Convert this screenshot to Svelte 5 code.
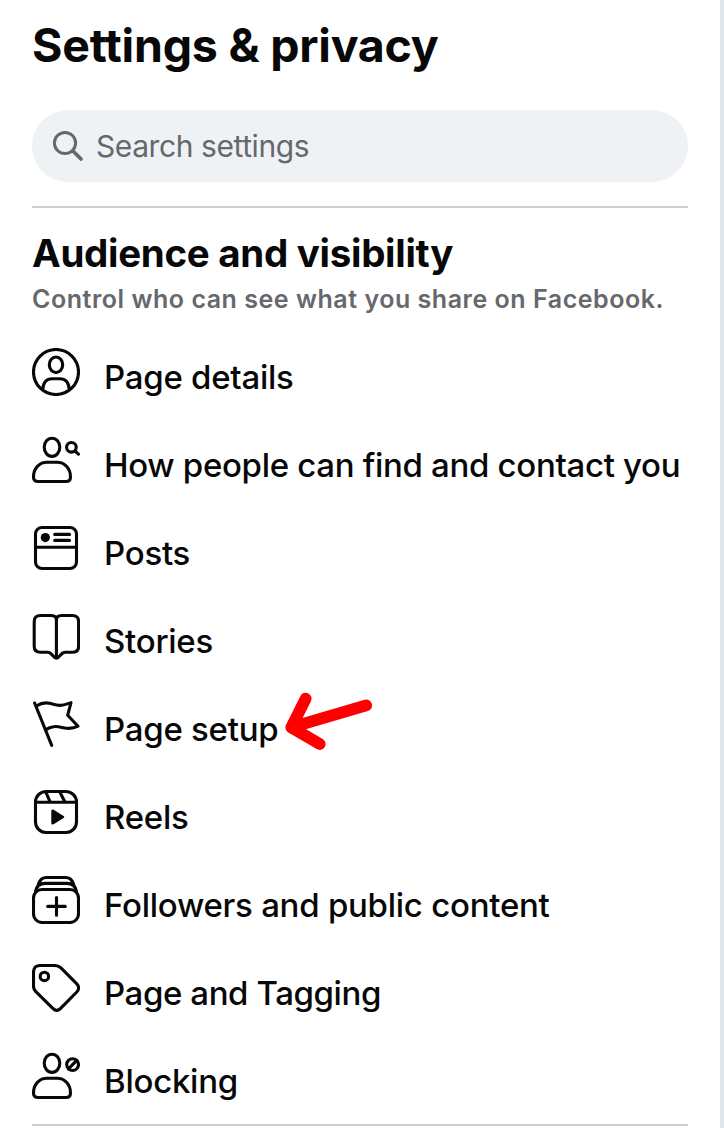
<script>
  const items = [
    { icon: 'profile', label: 'Page details' },
    { icon: 'find', label: 'How people can find and contact you' },
    { icon: 'posts', label: 'Posts' },
    { icon: 'stories', label: 'Stories' },
    { icon: 'flag', label: 'Page setup', marked: true },
    { icon: 'reels', label: 'Reels' },
    { icon: 'followers', label: 'Followers and public content' },
    { icon: 'tag', label: 'Page and Tagging' },
    { icon: 'blocking', label: 'Blocking' }
  ];
</script>

{#snippet person()}
  <ellipse cx="20" cy="11.3" rx="7.8" ry="9.1" />
  <path d="M1.5 41C1.5 31.5 8 26.3 15 26.3H25C32 26.3 38.5 31.5 38.5 41C38.5 44 37 45.5 34 45.5H6C3 45.5 1.5 44 1.5 41Z" />
{/snippet}

<main class="panel">
  <h1>Settings &amp; privacy</h1>
  <div class="search">
    <svg viewBox="0 0 32 32" width="32" height="32">
      <circle cx="13" cy="13" r="10.6" />
      <path d="M21 21L29 29" class="handle" />
    </svg>
    <span>Search settings</span>
  </div>
  <section>
    <h2>Audience and visibility</h2>
    <p>Control who can see what you share on Facebook.</p>
    <ul>
      {#each items as item}
        <li>
          <svg class="icon" viewBox="0 0 48 48" width="48" height="48">
            {#if item.icon === 'profile'}
              <circle cx="24" cy="24" r="22.5" />
              <ellipse cx="24" cy="16.8" rx="6.7" ry="7.8" />
              <path d="M10.6 41.5C11.3 34.5 15 30.8 20 30.8H28C33 30.8 36.7 34.5 37.4 41.5" />
            {:else if item.icon === 'find'}
              {@render person()}
              <circle cx="39.4" cy="11.3" r="4.8" />
              <path d="M43 15L46.4 18.2" />
            {:else if item.icon === 'posts'}
              <rect x="3.5" y="3.5" width="41" height="41" rx="6.5" />
              <path d="M3.5 23.3H44.5M22.7 10.4H37.5M22.7 16.4H37.5" />
              <circle class="solid" cx="13.3" cy="13.6" r="4.6" />
            {:else if item.icon === 'stories'}
              <path d="M24.4 8C24.4 5 22.3 3.5 19.3 3.5H8.5C4.2 3.5 2.2 5.5 2.2 9.5V34.3C2.2 38.3 4.2 40.3 8.5 40.3H15.5C18.5 40.3 19.3 41.5 20.8 43.6C22.2 45.5 23 46.2 24.4 46.2C25.8 46.2 26.6 45.5 28 43.6C29.5 41.5 30.3 40.3 33.3 40.3H40.3C44.6 40.3 46.6 38.3 46.6 34.3V9.5C46.6 5.5 44.6 3.5 40.3 3.5H29.5C26.5 3.5 24.4 5 24.4 8V46" />
            {:else if item.icon === 'flag'}
              <path d="M2.6 3L19.7 45.4M4.2 6C8.5 3.4 13 2.2 17.5 3.3C21.5 4.3 24.5 5.6 28.5 5.4C32.5 5.2 35.5 3.7 39 2.7L35.7 15.2L46 26.2C41.5 28.5 37 28.8 32.5 28C28.5 27.2 25.5 26 21.5 26.7C18.8 27.1 16.2 28.1 13.9 29.6" />
            {:else if item.icon === 'reels'}
              <rect x="3.5" y="3.5" width="41" height="41" rx="10.5" />
              <path d="M3.5 14.3H44.5M13.8 4L18 13.7M27.8 4L32.8 13.7" />
              <path class="solid" d="M19.3 23C19.3 21.4 20.6 21 22 21.9L31.6 28C32.5 28.6 32.5 29.4 31.6 30L22 36.1C20.6 37 19.3 36.6 19.3 35Z" />
            {:else if item.icon === 'followers'}
              <rect x="1.5" y="13.5" width="45" height="33" rx="8.5" />
              <path d="M3.5 15.5C4.6 9.5 8 7.4 13 7.4H35C40 7.4 43.4 9.5 44.5 15.5M6 9.5C7.8 3.5 10 1.5 15 1.5H33C38 1.5 40.2 3.5 42 9.5M15.7 30.4H33.3M24.5 21.6V39.2" />
            {:else if item.icon === 'tag'}
              <path d="M1.5 8.5C1.5 3.7 3.7 1.5 8.5 1.5H22.5C25.5 1.5 27.2 2.2 29.2 4.2L44.8 19.8C47.2 22.2 47.2 25.6 44.8 28L28.6 44.4C26.2 46.8 23.2 46.8 20.8 44.4L3.6 27.3C2.1 25.8 1.5 24.5 1.5 22.3Z" />
              <circle cx="12.4" cy="12.4" r="4.2" />
            {:else}
              {@render person()}
              <circle cx="40.6" cy="12.6" r="5.9" />
              <path d="M36.4 16.8L44.8 8.4" />
            {/if}
          </svg>
          <span class="label {item.icon}">{item.label}
            {#if item.marked}
              <svg class="arrow" viewBox="0 0 120 80" width="120" height="80">
                <path d="M35.7 18.7L21.3 47.3L49.7 64M21.3 47.3L96.2 25.4" />
              </svg>
            {/if}
          </span>
        </li>
      {/each}
    </ul>
  </section>
</main>

<style>
  :global(body) {
    background: #fff;
    overflow: hidden;
  }
  .panel {
    box-sizing: border-box;
    width: 724px;
    height: 1128px;
    padding: 16px 35px 0 32px;
    border-right: 1px solid #d3d8dd;
    box-shadow: inset -3px 0 #e1e6ea;
    color: #080809;
    font-family: Inter, 'Liberation Sans', sans-serif;
    overflow: hidden;
    border-right-color: #e1e6ea;
  }
  h1, h2, p, ul {
    margin: 0;
    padding: 0;
    white-space: nowrap;
  }
  h1 {
    height: 94px;
    font-size: 46.5px;
    line-height: 58px;
    font-weight: 700;
    letter-spacing: -0.24px;
  }
  .search {
    box-sizing: border-box;
    width: 656px;
    height: 72px;
    padding-left: 20px;
    display: flex;
    align-items: center;
    gap: 12px;
    border-radius: 36px;
    background: #eef2f5;
    color: #65686c;
    font-size: 30px;
    letter-spacing: -0.42px;
  }
  .search span {
    padding-bottom: 1px;
  }
  svg {
    flex: none;
    fill: none;
    stroke: currentColor;
    stroke-width: 3;
    stroke-linecap: round;
    stroke-linejoin: round;
  }
  .icon {
    stroke-width: 3.1;
  }
  .handle {
    stroke-width: 3.8;
  }
  section {
    box-sizing: border-box;
    width: 656px;
    height: 920px;
    margin-top: 24px;
    padding-top: 21px;
    border-top: 2px solid #ced0d4;
    border-bottom: 2px solid #ced0d4;
  }
  h2 {
    font-size: 38.5px;
    line-height: 48px;
    font-weight: 700;
    letter-spacing: -0.3px;
  }
  p {
    color: #65686c;
    font-size: 25px;
    line-height: 44px;
    font-weight: 600;
    letter-spacing: 0.53px;
  }
  ul {
    list-style: none;
    margin-top: 25px;
  }
  li {
    height: 88px;
    padding-top: 2px;
    box-sizing: border-box;
    display: flex;
    align-items: flex-start;
    gap: 24px;
  }
  .label {
    position: relative;
    padding-top: 5px;
    font-size: 33px;
    line-height: 48px;
    font-weight: 500;
    letter-spacing: -0.26px;
  }
  .label.find {
    letter-spacing: -0.32px;
  }
  .label.tag {
    letter-spacing: -0.41px;
  }
  .solid {
    fill: currentColor;
    stroke: none;
  }
  .arrow {
    position: absolute;
    left: 165.5px;
    top: -20px;
    color: #f00;
    stroke-width: 11.8;
  }
</style>
